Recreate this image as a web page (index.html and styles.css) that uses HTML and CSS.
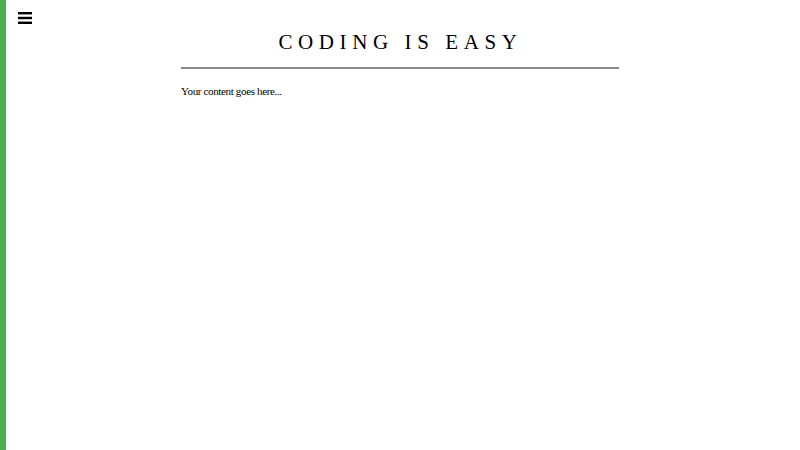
FILE: index.html
```html
<!DOCTYPE html>
<html>
<head>
<meta charset="utf-8">
<link rel="stylesheet" href="styles.css">
</head>
<body>
<div class="sidebar"></div>
<button class="menu" aria-label="menu">
  <svg width="14" height="12" viewBox="0 0 14 12"><rect x="0" y="0" width="14" height="2.4" fill="#000"/><rect x="0" y="4.8" width="14" height="2.4" fill="#000"/><rect x="0" y="9.6" width="14" height="2.4" fill="#000"/></svg>
</button>
<main class="main">
  <h1 class="title">CODING IS EASY</h1>
  <hr class="rule">
  <p class="content">Your content goes here...</p>
</main>
</body>
</html>
```
FILE: styles.css
```css
html, body { margin: 0; padding: 0; background: #fff; }
body { font-family: "Liberation Serif", "Times New Roman", serif; color: #000; min-height: 450px; }
.sidebar { position: fixed; left: 0; top: 0; bottom: 0; width: 6px; background: #4caf50; }
.menu { position: absolute; left: 18px; top: 12px; padding: 0; margin: 0; border: 0; background: none; line-height: 0; }
.main { width: 438px; margin: 0 auto; padding-top: 29px; }
.title { margin: 0; text-align: center; font-weight: normal; font-size: 21px; letter-spacing: 5.6px; line-height: 26px; padding-left: 1px; }
.rule { margin: 12px 0 0; border: 0; border-top: 2px solid #8a8a8a; height: 0; }
.content { margin: 16px 0 0; font-size: 11px; line-height: 13px; letter-spacing: -0.35px; }
```
